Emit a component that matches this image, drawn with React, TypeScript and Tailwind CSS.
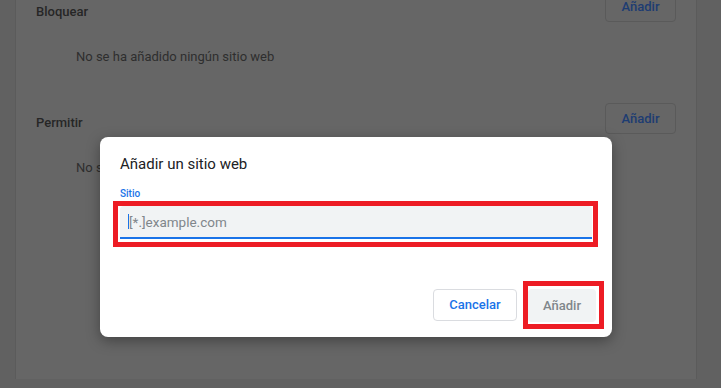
import type { ReactNode } from "react";

const font = { fontFamily: "Roboto, 'Liberation Sans', sans-serif" };

function DimButton({ children }: { children: ReactNode }) {
  return (
    <button
      type="button"
      className="flex h-[31px] w-[71px] items-center justify-center rounded-[4px] border border-[#5a5a5a] text-[13px] font-medium text-[#1d3c72]"
    >
      {children}
    </button>
  );
}

function Annotation({
  className,
  children,
}: {
  className: string;
  children: ReactNode;
}) {
  return (
    <div className={`border-[5px] border-[#ed1c24] ${className}`}>
      {children}
    </div>
  );
}

export default function App() {
  return (
    <div
      className="relative h-[388px] w-[721px] overflow-hidden bg-[#616161]"
      style={font}
    >
      <div className="ml-[15px] h-full w-[682px] border-x border-[#5b5b5b] bg-[#666666] pl-[20px] pr-[20px]">
        <div className="-mt-[9px] flex h-[31px] items-start justify-between">
          <span className="mt-[11px] text-[13px] font-medium leading-[20px] text-[#262626]">
            Bloquear
          </span>
          <DimButton>Añadir</DimButton>
        </div>

        <p className="mt-[25px] pl-[40px] text-[13px] leading-[20px] text-[#2e2e2e]">
          No se ha añadido ningún sitio web
        </p>

        <div className="mt-[36px] flex h-[31px] items-start justify-between">
          <span className="mt-[10px] text-[13px] font-medium leading-[20px] text-[#262626]">
            Permitir
          </span>
          <DimButton>Añadir</DimButton>
        </div>

        <p className="mt-[24px] pl-[40px] text-[13px] leading-[20px] text-[#2e2e2e]">
          No se ha añadido ningún sitio web
        </p>
      </div>

      <div className="absolute left-[100px] top-[137px] flex h-[200px] w-[512px] flex-col rounded-[8px] bg-white shadow-[0_4px_14px_rgba(0,0,0,0.35)]">
        <div className="px-[20px] pt-[17px]">
          <h2 className="text-[15px] font-normal leading-[20px] text-[#202124]">
            Añadir un sitio web
          </h2>
          <label className="mt-[14px] block text-[10px] font-medium leading-[12px] text-[#1a73e8]">
            Sitio
          </label>
          <Annotation className="-ml-[7px] -mr-[6px] mt-[1px] pb-[3px] pl-[2px] pr-[1px]">
            <div className="flex h-[33px] items-center rounded-t-[4px] border-b-2 border-[#1a73e8] bg-[#f1f3f4] pl-[8px]">
              <span className="h-[15px] w-px bg-[#1a73e8]" />
              <span className="text-[13.5px] leading-[20px] text-[#80868b]">
                [*.]example.com
              </span>
            </div>
          </Annotation>
        </div>

        <div className="mt-auto flex items-center justify-end gap-[6px] pb-[8px] pr-[8px]">
          <button
            type="button"
            className="flex h-[32px] w-[84px] items-center justify-center rounded-[4px] border border-[#dadce0] bg-white text-[13px] font-medium text-[#1a73e8]"
          >
            Cancelar
          </button>
          <Annotation className="pb-[2px] pr-[3px] pt-[3px]">
            <button
              type="button"
              disabled
              className="flex h-[33px] w-[68px] items-center justify-center rounded-[4px] bg-[#f1f3f4] text-[13px] font-medium text-[#80868b]"
            >
              Añadir
            </button>
          </Annotation>
        </div>
      </div>
    </div>
  );
}
